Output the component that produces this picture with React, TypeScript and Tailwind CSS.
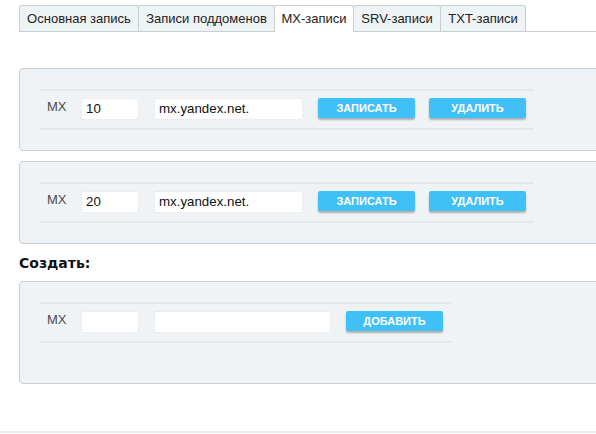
import React from "react";

const tabs = [
  { label: "Основная запись", active: false, w: "w-[120px]" },
  { label: "Записи поддоменов", active: false, w: "w-[137px]" },
  { label: "MX-записи", active: true, w: "w-[80px]" },
  { label: "SRV-записи", active: false, w: "w-[88px]" },
  { label: "TXT-записи", active: false, w: "w-[86px]" },
];

function Btn({ children }: { children: React.ReactNode }) {
  return (
    <button className="h-[20px] w-[97px] rounded-[2px] bg-[#3fc0f6] text-[11px] font-bold leading-[20px] text-white shadow-[0_2px_2px_rgba(0,0,0,0.28)] font-['Liberation_Sans',Arial,sans-serif]">
      {children}
    </button>
  );
}

function Input({ value, w }: { value: string; w: string }) {
  return (
    <div
      className={`h-[22px] ${w} rounded-[3px] border border-dotted border-[#d9dcdf] bg-white pl-[4px] text-[13.3px] leading-[20px] text-[#111]`}
    >
      {value}
    </div>
  );
}

function Row({
  prio,
  host,
  create,
}: {
  prio: string;
  host: string;
  create?: boolean;
}) {
  return (
    <div
      className={`${create ? "w-[411px]" : "w-[494px]"} border-y-2 border-[#e4e8eb] pt-[7px] pb-[8px]`}
    >
      <div className="flex items-start">
        <div className="w-[41px] pl-[7px] pt-[1px] text-[13px] leading-[15px] text-[#4b4b4b]">
          MX
        </div>
        <Input value={prio} w="w-[58px]" />
        <div className="w-[15px]" />
        <Input value={host} w={create ? "w-[177px]" : "w-[149px]"} />
        <div className="w-[15px]" />
        {create ? (
          <Btn>ДОБАВИТЬ</Btn>
        ) : (
          <>
            <Btn>ЗАПИСАТЬ</Btn>
            <div className="w-[14px]" />
            <Btn>УДАЛИТЬ</Btn>
          </>
        )}
      </div>
    </div>
  );
}

function Panel({ children, tall }: { children: React.ReactNode; tall?: boolean }) {
  return (
    <div
      className={`mr-[-20px] rounded-[4px] border border-[#c9ced2] bg-[#eff3f6] pl-[20px] pt-[20px] ${tall ? "pb-[40px]" : "pb-[20px]"}`}
    >
      {children}
    </div>
  );
}

export default function App() {
  return (
    <div className="relative h-[434px] w-[596px] overflow-hidden bg-white font-['Liberation_Sans',Arial,sans-serif]">
      <div className="pl-[19px] pt-[5px]">
        <div className="flex border-b border-[#c9ced2]">
          {tabs.map((t, i) => (
            <div
              key={i}
              className={`${t.w} -mr-px h-[26px] shrink-0 rounded-t-[3px] border border-b-0 border-[#c9ced2] text-center text-[13px] leading-[25px] ${
                t.active
                  ? "relative z-10 mb-[-1px] h-[27px] bg-white text-[#222]"
                  : "bg-[#eef3f6] text-[#222]"
              }`}
            >
              {t.label}
            </div>
          ))}
        </div>

        <div className="mt-[36px]">
          <Panel>
            <Row prio="10" host="mx.yandex.net." />
          </Panel>
        </div>
        <div className="mt-[10px]">
          <Panel>
            <Row prio="20" host="mx.yandex.net." />
          </Panel>
        </div>

        <div className="mt-[11px] mb-[9px] font-['DejaVu_Sans',Verdana,sans-serif] text-[14px] font-bold leading-[17px] text-[#111]">
          Создать:
        </div>

        <Panel tall>
          <Row prio="" host="" create />
        </Panel>
      </div>
      <div className="absolute left-0 right-0 top-[431px] h-[2px] bg-[#e8ecee]" />
    </div>
  );
}
